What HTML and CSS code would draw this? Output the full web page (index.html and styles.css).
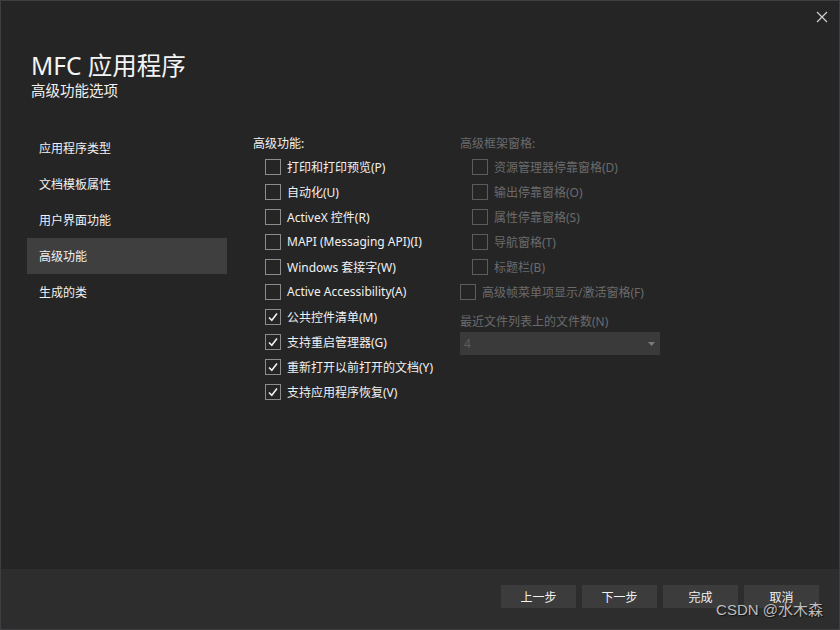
FILE: index.html
```html
<!DOCTYPE html>
<html>
<head>
  <meta charset="UTF-8">
  <title>MFC 应用程序</title>
  <link rel="stylesheet" href="styles.css">
</head>
<body>
<div id="dialog">
    <div class="close">
        <svg width="12" height="12" viewBox="0 0 12 12"><path d="M1 1 L11 11 M11 1 L1 11" stroke="#d0d0d0" stroke-width="1.2" fill="none"/></svg>
    </div>
    <div class="header">
        <h1 class="title">MFC 应用程序</h1>
        <p class="subtitle">高级功能选项</p>
    </div>
    <div class="main">
        <ul class="nav">
            <li>应用程序类型</li>
            <li>文档模板属性</li>
            <li>用户界面功能</li>
            <li class="active">高级功能</li>
            <li>生成的类</li>
        </ul>
        <div class="col left">
            <p class="label">高级功能:</p>
            <div class="opts">
                <label class="check"><span class="box"></span>打印和打印预览(P)</label>
                <label class="check"><span class="box"></span>自动化(U)</label>
                <label class="check"><span class="box"></span>ActiveX 控件(R)</label>
                <label class="check"><span class="box"></span>MAPI (Messaging API)(I)</label>
                <label class="check"><span class="box"></span>Windows 套接字(W)</label>
                <label class="check"><span class="box"></span>Active Accessibility(A)</label>
                <label class="check"><span class="box on"><svg width="14" height="14" viewBox="0 0 14 14"><path d="M3 7.5 L5.8 10.3 L11 3.5" stroke="#f0f0f0" stroke-width="1.6" fill="none"/></svg></span>公共控件清单(M)</label>
                <label class="check"><span class="box on"><svg width="14" height="14" viewBox="0 0 14 14"><path d="M3 7.5 L5.8 10.3 L11 3.5" stroke="#f0f0f0" stroke-width="1.6" fill="none"/></svg></span>支持重启管理器(G)</label>
                <label class="check"><span class="box on"><svg width="14" height="14" viewBox="0 0 14 14"><path d="M3 7.5 L5.8 10.3 L11 3.5" stroke="#f0f0f0" stroke-width="1.6" fill="none"/></svg></span>重新打开以前打开的文档(Y)</label>
                <label class="check"><span class="box on"><svg width="14" height="14" viewBox="0 0 14 14"><path d="M3 7.5 L5.8 10.3 L11 3.5" stroke="#f0f0f0" stroke-width="1.6" fill="none"/></svg></span>支持应用程序恢复(V)</label>
            </div>
        </div>
        <div class="col right disabled">
            <p class="label">高级框架窗格:</p>
            <div class="opts">
                <label class="check"><span class="box"></span>资源管理器停靠窗格(D)</label>
                <label class="check"><span class="box"></span>输出停靠窗格(O)</label>
                <label class="check"><span class="box"></span>属性停靠窗格(S)</label>
                <label class="check"><span class="box"></span>导航窗格(T)</label>
                <label class="check"><span class="box"></span>标题栏(B)</label>
            </div>
            <label class="check flat"><span class="box"></span>高级帧菜单项显示/激活窗格(F)</label>
            <p class="label recent">最近文件列表上的文件数(N)</p>
            <div class="select">
                <span>4</span>
                <svg width="7" height="4" viewBox="0 0 7 4"><path d="M0 0 L7 0 L3.5 4 Z" fill="#7a7a7a"/></svg>
            </div>
        </div>
    </div>
    <div class="footer">
        <button class="btn">上一步</button>
        <button class="btn">下一步</button>
        <button class="btn">完成</button>
        <button class="btn">取消</button>
    </div>
    <div class="watermark">CSDN @水木森</div>
</div>
</body>
</html>
```

FILE: styles.css
```css
* {
    margin: 0;
    padding: 0;
    box-sizing: border-box;
}
body {
    background-color: #252526;
    font-family: "Noto Sans", "Noto Sans CJK SC", sans-serif;
    color: #f1f1f1;
}
#dialog {
    width: 840px;
    height: 630px;
    position: relative;
    display: flex;
    flex-direction: column;
    background-color: #252526;
    border: 1px solid #3f3f42;
}
.close {
    position: absolute;
    top: 10px;
    right: 11px;
    width: 12px;
    height: 12px;
}
.close svg {
    display: block;
}
.header {
    padding: 49px 0 0 30px;
    height: 129px;
}
.title {
    font-weight: normal;
    font-size: 24.5px;
    line-height: 32px;
    color: #f4f4f4;
}
.subtitle {
    font-size: 14.5px;
    line-height: 16px;
}
.main {
    flex: 1;
    display: flex;
}
.nav {
    list-style: none;
    width: 200px;
    margin-left: 26px;
    margin-right: 26px;
}
.nav li {
    height: 36px;
    line-height: 34px;
    padding: 2px 0 0 12px;
    font-size: 12px;
}
.nav li.active {
    background-color: #3f3f40;
}
.col {
    font-size: 12px;
    padding-top: 1px;
}
.col.left {
    width: 207px;
}
.label {
    line-height: 20px;
    height: 23px;
    padding-top: 3px;
}
.check {
    display: flex;
    align-items: center;
    height: 25px;
    margin-left: 12px;
}
.check.flat {
    margin-left: 0;
}
.box {
    width: 16px;
    height: 16px;
    border: 1px solid #8c8c8c;
    margin-right: 6px;
    display: flex;
    align-items: center;
    justify-content: center;
}
.box svg {
    display: block;
}
.disabled {
    color: #6b6b6b;
}
.disabled .box {
    border-color: #5c5c5c;
}
.recent {
    margin-top: 5px;
}
.select {
    width: 200px;
    height: 23px;
    background-color: #3a3a3b;
    display: flex;
    align-items: center;
    justify-content: space-between;
    padding: 0 5px 0 4px;
    color: #5e5e5e;
}
.footer {
    height: 60px;
    background-color: #2d2d2d;
    display: flex;
    justify-content: flex-end;
    gap: 6px;
    padding: 16px 20px 0 0;
}
.btn {
    width: 75px;
    height: 23px;
    background-color: #3c3c3c;
    border: none;
    color: #f1f1f1;
    font-family: "Noto Sans", "Noto Sans CJK SC", sans-serif;
    font-size: 12px;
}
.watermark {
    position: absolute;
    right: 16px;
    bottom: 10px;
    font-family: "Liberation Sans", "Noto Sans CJK SC", sans-serif;
    font-size: 15px;
    color: #bdbdbd;
    text-shadow: 1px 1px 1px #111;
}
```
